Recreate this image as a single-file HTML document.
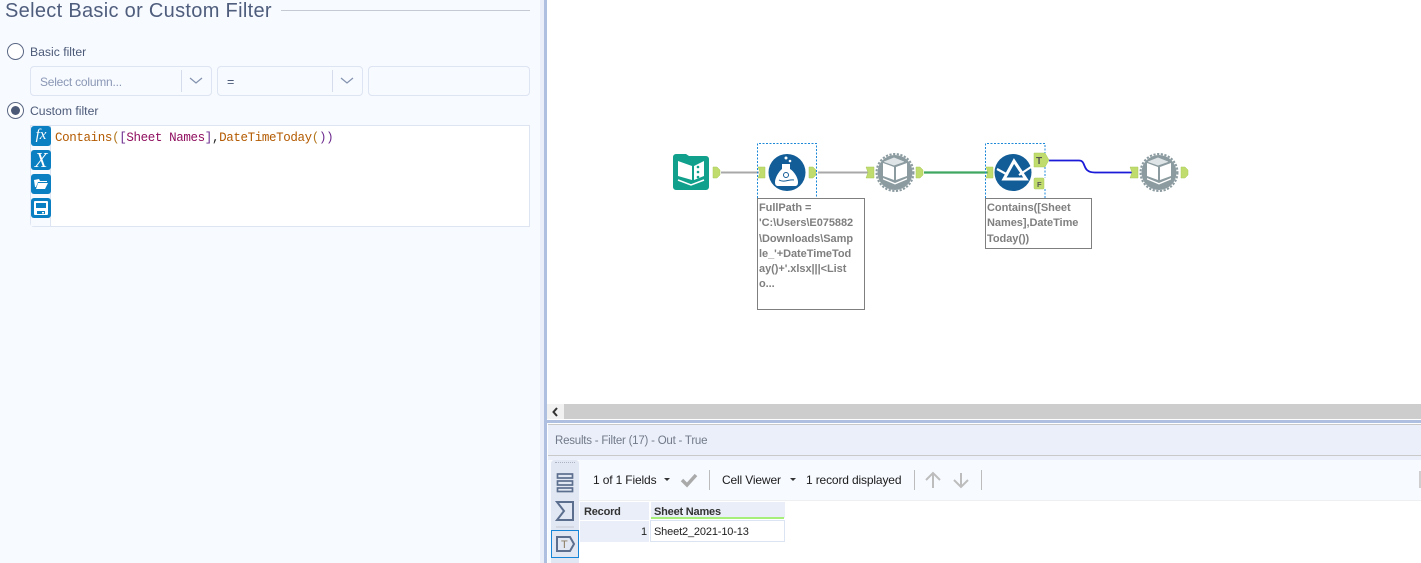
<!DOCTYPE html>
<html><head><meta charset="utf-8"><style>
html,body{margin:0;padding:0;background:#fff}
#r{position:relative;width:1421px;height:563px;overflow:hidden;background:#fff;font-family:"Liberation Sans",sans-serif}
#r div,#r span.a{position:absolute;white-space:nowrap}
.b{box-sizing:border-box}
.lab{font-size:12.2px;color:#4c5a78}
.note{font-size:11px;line-height:15.3px;color:#7f7f7f;font-weight:bold;letter-spacing:-.05px}
.t{font-size:12px;color:#1b1b1b;letter-spacing:-.15px}
</style></head><body><div id="r">
<!-- left panel -->
<div style="left:0;top:0;width:540px;height:563px;background:#f7faff"></div>
<div style="left:540px;top:0;width:4px;height:563px;background:#e9eef9"></div>
<div style="left:544px;top:0;width:3px;height:563px;background:#aebfdf"></div>
<div style="left:5px;top:-2px;font-size:20px;color:#4f5d7d;letter-spacing:.31px;line-height:26px">Select Basic or Custom Filter</div>
<div style="left:281px;top:10px;width:249px;height:1px;background:#c5c9d2"></div>

<div class="b" style="left:7px;top:43px;width:17px;height:17px;border:1.5px solid #5a6784;border-radius:50%;background:#fff"></div>
<div class="lab" style="left:30px;top:45px">Basic filter</div>
<div class="b" style="left:30px;top:66px;width:182px;height:30px;border:1px solid #dde4f2;border-radius:4px"></div>
<div style="left:40px;top:75px;font-size:12px;letter-spacing:-.22px;color:#8a97b5">Select column...</div>
<div style="left:181px;top:70px;width:1px;height:22px;background:#d5dcec"></div>
<svg style="position:absolute;left:189px;top:77px" width="14" height="8"><path d="M1 1l6 5 6-5" fill="none" stroke="#8291ae" stroke-width="1.2"/></svg>
<div class="b" style="left:217px;top:66px;width:146px;height:30px;border:1px solid #dde4f2;border-radius:4px"></div>
<div style="left:227px;top:75px;font-size:12.5px;color:#4c5a78">=</div>
<div style="left:332px;top:70px;width:1px;height:22px;background:#d5dcec"></div>
<svg style="position:absolute;left:340px;top:77px" width="14" height="8"><path d="M1 1l6 5 6-5" fill="none" stroke="#8291ae" stroke-width="1.2"/></svg>
<div class="b" style="left:368px;top:66px;width:162px;height:30px;border:1px solid #dde4f2;border-radius:4px"></div>

<div class="b" style="left:7px;top:102px;width:17px;height:17px;border:1.5px solid #5a6784;border-radius:50%;background:#fff"></div>
<div style="left:11px;top:106px;width:9px;height:9px;border-radius:50%;background:#4c5a78"></div>
<div class="lab" style="left:30px;top:104px">Custom filter</div>

<div class="b" style="left:30px;top:125px;width:500px;height:102px;border:1px solid #dde4f2;border-radius:0 0 0 4px;background:#fff"></div>
<div style="left:31px;top:126px;width:19px;height:100px;background:#f7faff;border-right:1px solid #dde4f2"></div>
<div style="left:31px;top:126px;width:20px;height:20px;background:#0a7fc2;border-radius:3px;color:#fff;font:italic 15px/18px 'Liberation Serif',serif;text-align:center">fx</div>
<div style="left:31px;top:150px;width:20px;height:20px;background:#0a7fc2;border-radius:3px;color:#fff;font:italic 21px/20px 'Liberation Serif',serif;text-align:center">X</div>
<div style="left:31px;top:174px;width:20px;height:20px;background:#0a7fc2;border-radius:3px"></div>
<svg style="position:absolute;left:31px;top:174px" width="20" height="20"><path d="M3 6l5-1 1 2h7v1H7L5 13H4zM7 9h10l-3 6H5z" fill="#fff"/></svg>
<div style="left:31px;top:198px;width:20px;height:20px;background:#0a7fc2;border-radius:3px"></div>
<svg style="position:absolute;left:31px;top:198px" width="20" height="20"><path d="M4 3h12a1 1 0 0 1 1 1v12a1 1 0 0 1-1 1H4a1 1 0 0 1-1-1V4a1 1 0 0 1 1-1zM5 5v5h10V5zM6 13v3h8v-3z" fill="#fff" fill-rule="evenodd"/><rect x="11" y="14" width="2" height="1.500" fill="#fff"/></svg>
<div style="left:55px;top:131px;font:12.5px/15px 'Liberation Mono','DejaVu Sans Mono',monospace;letter-spacing:-.37px;color:#b35a00">Contains<span style="color:#b4781e">(</span><span style="color:#6d2b8f">[</span><span style="color:#8f0f5f">Sheet Names</span><span style="color:#6d2b8f">]</span><span style="color:#222">,</span>DateTimeToday<span style="color:#b4781e">(</span><span style="color:#6d2b8f">))</span></div>

<!-- canvas connections -->
<svg style="position:absolute;left:547px;top:0" width="874" height="404">
<path d="M174 172.500H212M271 172.500H324" stroke="#a8a8a8" stroke-width="2" fill="none"/>
<path d="M377 172.500H442" stroke="#3fa75f" stroke-width="2.200" fill="none"/>
<path d="M502 160.500H532C540 160.500 534 172.500 548 172.500H585" stroke="#1a1ad8" stroke-width="1.800" fill="none"/>
<g fill="#c0dc6c" stroke="#a9c95a" stroke-width=".5">
<path d="M166 167h4l3 3v5l-3 3h-4z"/><path d="M211 167h7v11h-7l2-5.500z"/>
<path d="M262 167h4l3 3v5l-3 3h-4z"/><path d="M319 167h8v11h-8l2-5.500z"/>
<path d="M369 167h4l3 3v5l-3 3h-4z"/><path d="M439 167h7v11h-7l2-5.500z"/>
<path d="M583 167h8v11h-8l2-5.500z"/><path d="M634 167h4l3 3v5l-3 3h-4z"/>
<path d="M487 153h11l4 7-4 7h-11z"/><rect x="487" y="178" width="10" height="11" rx="1"/>
</g>
<!-- book input -->
<g transform="translate(1 0)">
<path d="M125 157a3 3 0 0 1 3-3h10l3 2h17a3 3 0 0 1 3 3v28a3 3 0 0 1-3 3h-30a3 3 0 0 1-3-3z" fill="#10a08c"/>
<path d="M130 161l14 5v14l-14-4zM146 166l10-5v15l-10 4z" fill="#fff"/>
<path d="M130 180l13 5 13-5" fill="none" stroke="#fff" stroke-width="1.500"/>
<circle cx="150" cy="167" r="1.300" fill="#10a08c"/><circle cx="150" cy="172" r="1.300" fill="#10a08c"/><circle cx="150" cy="177" r="1.300" fill="#10a08c"/>
</g>
<!-- formula -->
<circle cx="240" cy="172.500" r="18.500" fill="#125d97"/>
<path d="M235 164h8v5c4 2 8 9 8 13 0 3-1 4-3 4h-17c-2 0-3-1-3-4 0-4 4-11 7-13z" fill="#fff"/>
<circle cx="239" cy="175" r="2.500" fill="none" stroke="#125d97" stroke-width="1"/><path d="M232 180c5 3 10-1 15 0" stroke="#125d97" fill="none" stroke-width="1"/>
<circle cx="239" cy="158" r="1.500" fill="#fff"/><circle cx="243" cy="161" r="1.300" fill="#fff"/>
<!-- browse gears -->
<g fill="#8b9ba0"><circle cx="348" cy="172.500" r="17.500"/><circle cx="348" cy="172.500" r="18.500" fill="none" stroke="#8b9ba0" stroke-width="2" stroke-dasharray="2.200 1.500"/>
<circle cx="612" cy="172.500" r="17.500"/><circle cx="612" cy="172.500" r="18.500" fill="none" stroke="#8b9ba0" stroke-width="2" stroke-dasharray="2.200 1.500"/></g>
<g fill="#fff"><path d="M337 162l10 3.500 10-3.500v-.5l-10-4-10 4z" fill="#dfe5e7"/><path d="M336 163l11 4v13l-11-4zM360 163l-11 4v13l11-4z"/><path d="M336 178l12 5 12-5v1.500l-12 5-12-5z"/>
<path d="M601 162l10 3.500 10-3.500v-.5l-10-4-10 4z" fill="#dfe5e7"/><path d="M600 163l11 4v13l-11-4zM624 163l-11 4v13l11-4z"/><path d="M600 178l12 5 12-5v1.500l-12 5-12-5z"/></g>
<!-- filter -->
<circle cx="466" cy="172.500" r="18.500" fill="#125d97"/>
<path d="M467 161l-10 18h22z" fill="none" stroke="#fff" stroke-width="3"/><path d="M450 169l11 6M472 175l12-8" stroke="#fff" stroke-width="2.200"/>
<g fill="#555" font-family="Liberation Sans" font-weight="bold"><text x="489" y="164" font-size="10">T</text><text x="490" y="187" font-size="7.500">F</text></g>
<!-- selection boxes -->
<g fill="none" stroke="#1e88d8" stroke-dasharray="2 1.500"><path d="M210.500 198V143.500H269.500V198"/><path d="M438.500 198V143.500H498V153M498 167V178M498 189V198"/></g>
</svg>

<div class="b" style="left:757px;top:198px;width:108px;height:112px;border:1px solid #7f7f7f;background:#fff"></div>
<div class="note" style="left:759px;top:201px">FullPath =<br>'C:\Users\E075882<br>\Downloads\Samp<br>le_'+DateTimeTod<br>ay()+'.xlsx|||&lt;List<br>o...</div>
<div class="b" style="left:985px;top:198px;width:107px;height:51px;border:1px solid #7f7f7f;background:#fff"></div>
<div class="note" style="left:987px;top:201px">Contains([Sheet<br>Names],DateTime<br>Today()) </div>

<!-- scrollbar -->
<div style="left:547px;top:404px;width:874px;height:15px;background:#cdcdcd"></div>
<div style="left:547px;top:404px;width:17px;height:15px;background:#f1f1f1"></div>
<svg style="position:absolute;left:551px;top:407px" width="10" height="10"><path d="M6 1L2.500 5 6 9" fill="none" stroke="#333" stroke-width="2"/></svg>
<div style="left:547px;top:419px;width:874px;height:1px;background:#fff"></div>
<div style="left:547px;top:420px;width:874px;height:3px;background:#aebfdf"></div>

<!-- results -->
<div class="b" style="left:548px;top:424px;width:873px;height:32px;background:#ebeff9;border-top:1px solid #c9c9c9;border-bottom:1px solid #c9c9c9"></div>
<div style="left:548px;top:456px;width:873px;height:4px;background:#ebeff9"></div>
<div style="left:555px;top:435px;font-size:11.5px;color:#717a8a;letter-spacing:-.22px">Results - Filter (17) - Out - True</div>
<div style="left:548px;top:460px;width:3px;height:103px;background:#f7faff"></div>
<div style="left:551px;top:460px;width:28px;height:103px;background:#e2e8f3;border-radius:3px 3px 0 0"></div>
<div style="left:579px;top:460px;width:842px;height:40px;background:#f7faff"></div>
<div style="left:579px;top:500px;width:842px;height:1px;background:#eeeff1"></div>
<div style="left:555px;top:462px;width:20px;height:0;border-top:1.500px dotted #aab2c4"></div>
<svg style="position:absolute;left:551px;top:470px" width="28" height="90">
<g fill="none" stroke="#5c6f8f" stroke-width="1.700"><rect x="6.500" y="4" width="15" height="4"/><rect x="6.500" y="11" width="15" height="4"/><rect x="6.500" y="18" width="15" height="3.500"/>
<path d="M6 32h16v18H6l7-9z" stroke-width="2"/></g>
<path d="M5 57h18" stroke="#c5c9d2" stroke-width="1"/>
<rect x="0.500" y="60.500" width="27" height="27" fill="#e2e8f3" stroke="#1685d8"/>
<path d="M6 67h13l4 7-4 7H6z" fill="none" stroke="#5c6f8f" stroke-width="2"/>
<text x="10" y="78" font-size="11" fill="#8a7a60" font-family="Liberation Sans">T</text></svg>
<div class="t" style="left:593px;top:473px">1 of 1 Fields</div>
<svg style="position:absolute;left:662px;top:477px" width="10" height="6"><path d="M2 1h6L5 4z" fill="#333"/></svg>
<svg style="position:absolute;left:680px;top:472px" width="18" height="16"><path d="M2 8l5 5L16 3" fill="none" stroke="#aaa" stroke-width="3.500"/></svg>
<div style="left:709px;top:470px;width:1px;height:20px;background:#bcbcbc"></div>
<div class="t" style="left:722px;top:473px">Cell Viewer</div>
<svg style="position:absolute;left:788px;top:477px" width="10" height="6"><path d="M2 1h6L5 4z" fill="#333"/></svg>
<div class="t" style="left:806px;top:473px">1 record displayed</div>
<div style="left:914px;top:470px;width:1px;height:20px;background:#bcbcbc"></div>
<svg style="position:absolute;left:922px;top:470px" width="50" height="20"><g fill="none" stroke="#bdbdbd" stroke-width="2"><path d="M11 18V4M4 10l7-7 7 7"/><path d="M39 3v14M32 10l7 7 7-7"/></g></svg>
<div style="left:981px;top:470px;width:1px;height:20px;background:#bcbcbc"></div>
<div style="left:1419px;top:471px;width:2px;height:17px;background:#cfcfcf"></div>

<!-- table -->
<div style="left:580px;top:502px;width:69px;height:18px;background:#e9eef8"></div>
<div style="left:651px;top:502px;width:134px;height:16px;background:#e9eef8"></div>
<div style="left:651px;top:517px;width:133px;height:2px;background:#a6f07a"></div>
<div style="left:580px;top:521px;width:69px;height:21px;background:#e9eef8"></div>
<div class="b" style="left:650px;top:520px;width:135px;height:22px;border:1px solid #dbe4f2;background:#fff"></div>
<div style="left:584px;top:506px;font-size:11px;font-weight:bold;letter-spacing:-.2px;color:#333">Record</div>
<div style="left:654px;top:506px;font-size:11px;font-weight:bold;letter-spacing:-.2px;color:#333">Sheet Names</div>
<div style="left:641px;top:526px;font-size:11px;color:#222">1</div>
<div style="left:654px;top:526px;font-size:11px;letter-spacing:-.15px;color:#222">Sheet2_2021-10-13</div>
</div></body></html>
